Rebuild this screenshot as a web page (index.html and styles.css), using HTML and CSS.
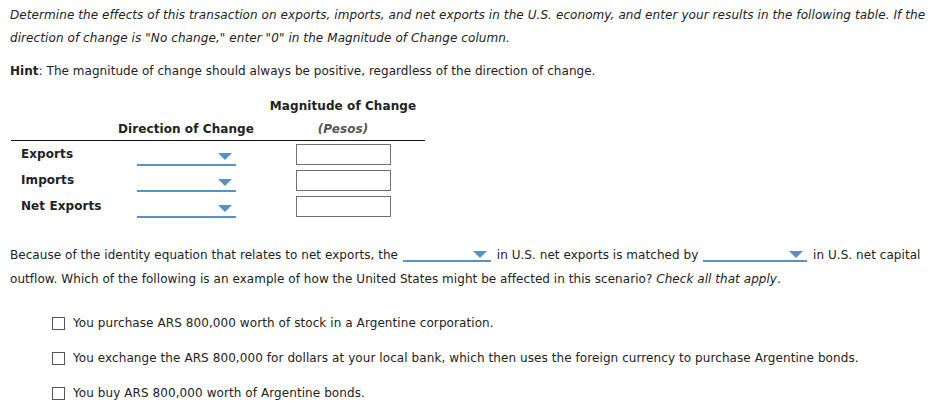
FILE: index.html
```html
<!DOCTYPE html>
<html>
<head>
<meta charset="utf-8">
<link rel="stylesheet" href="styles.css">
</head>
<body>
<div class="page">
  <p class="intro">Determine the effects of this transaction on exports, imports, and net exports in the U.S. economy, and enter your results in the following table. If the direction of change is "No change," enter "0" in the Magnitude of Change column.</p>
  <p class="hint"><b>Hint</b>: The magnitude of change should always be positive, regardless of the direction of change.</p>

  <table class="grid">
    <thead>
      <tr>
        <th class="lab"></th>
        <th class="dir"></th>
        <th class="mag">Magnitude of Change</th>
      </tr>
      <tr class="sub">
        <th class="lab"></th>
        <th class="dir">Direction of Change</th>
        <th class="mag"><i>(Pesos)</i></th>
      </tr>
    </thead>
    <tbody>
      <tr>
        <td class="lab">Exports</td>
        <td class="dir"><span class="select"><span class="arrow"></span></span></td>
        <td class="mag"><span class="box"></span></td>
      </tr>
      <tr>
        <td class="lab">Imports</td>
        <td class="dir"><span class="select"><span class="arrow"></span></span></td>
        <td class="mag"><span class="box"></span></td>
      </tr>
      <tr>
        <td class="lab">Net Exports</td>
        <td class="dir"><span class="select"><span class="arrow"></span></span></td>
        <td class="mag"><span class="box"></span></td>
      </tr>
    </tbody>
  </table>

  <p class="para">Because of the identity equation that relates to net exports, the <span class="select inline s1"><span class="arrow"></span></span> in U.S. net exports is matched by <span class="select inline s2"><span class="arrow"></span></span> in U.S. net capital outflow. Which of the following is an example of how the United States might be affected in this scenario? <i>Check all that apply</i>.</p>

  <ul class="choices">
    <li><span class="check"></span>You purchase ARS 800,000 worth of stock in a Argentine corporation.</li>
    <li><span class="check"></span>You exchange the ARS 800,000 for dollars at your local bank, which then uses the foreign currency to purchase Argentine bonds.</li>
    <li><span class="check"></span>You buy ARS 800,000 worth of Argentine bonds.</li>
  </ul>
</div>
</body>
</html>
```
FILE: styles.css
```css
html, body {
  margin: 0;
  padding: 0;
  background: #fff;
}
body {
  font-family: "DejaVu Sans", Verdana, sans-serif;
  font-size: 12px;
  color: #222;
  letter-spacing: 0.08px;
}
.page {
  padding: 4px 10px 0 10px;
}
.intro {
  margin: 0;
  font-style: italic;
  line-height: 23px;
}
.hint {
  margin: 10px 0 0 0;
  line-height: 23px;
  letter-spacing: 0.04px;
}
.grid {
  border-collapse: collapse;
  margin: 12px 0 0 1px;
}
.grid th {
  font-weight: bold;
  padding: 0;
  height: 22px;
  vertical-align: middle;
  text-align: center;
  white-space: nowrap;
}
.grid .sub th {
  border-bottom: 1px solid #111;
  height: 23px;
}
.grid th i {
  color: #555;
}
.grid td {
  padding: 0;
  height: 26px;
  vertical-align: middle;
}
.grid .lab {
  width: 100px;
}
.grid td.lab {
  font-weight: bold;
  padding-left: 10px;
  width: 90px;
}
.grid .dir {
  width: 150px;
  text-align: center;
}
.grid .mag {
  width: 164px;
  text-align: center;
}

.select {
  display: inline-block;
  position: relative;
  width: 99px;
  height: 18px;
  border-bottom: 2px solid #5592c8;
  vertical-align: middle;
}
.grid .select {
  margin-top: 4px;
}
.arrow {
  position: absolute;
  right: 4px;
  top: 7px;
  width: 0;
  height: 0;
  border-left: 7px solid transparent;
  border-right: 7px solid transparent;
  border-top: 7px solid #5592c8;
}
.box {
  display: block;
  width: 93px;
  height: 19px;
  border: 1px solid #707070;
  margin: 0 0 0 35px;
}
.para {
  margin: 24px 0 0 0;
  line-height: 24px;
  letter-spacing: 0.05px;
}
.select.inline {
  vertical-align: baseline;
  height: 16px;
  margin: 0 2px -3px 1px;
}
.s1 { width: 88px; }
.s2 { width: 104px; }
.choices {
  list-style: none;
  margin: 23px 0 0 0;
  padding: 0 0 0 42px;
}
.choices li {
  display: flex;
  align-items: center;
  height: 18px;
  margin-bottom: 17px;
}
.check {
  display: inline-block;
  width: 11px;
  height: 11px;
  border: 1px solid #555;
  margin-right: 8px;
  flex: none;
}
```
